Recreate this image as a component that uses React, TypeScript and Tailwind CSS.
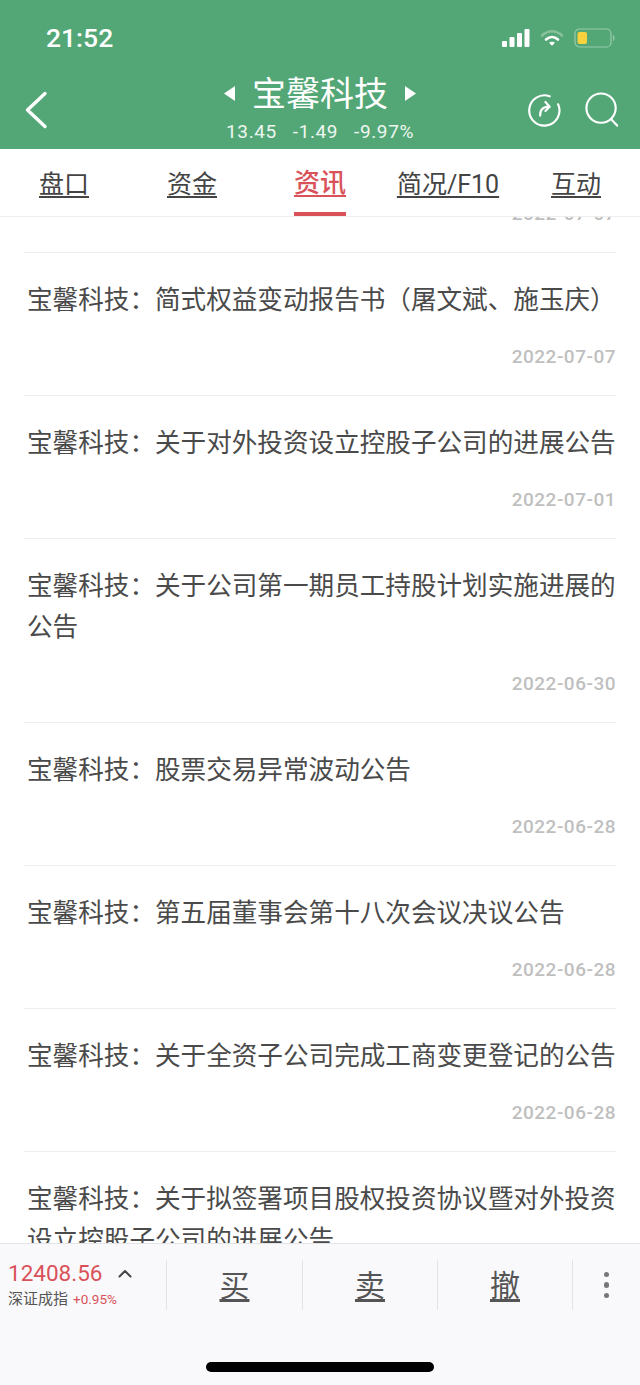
import React from 'react';

const tabs = ['盘口', '资金', '资讯', '简况/F10', '互动'];

const news = [
  { title: '宝馨科技：关于公司股东减持股份的预披露公告', date: '2022-07-07' },
  { title: '宝馨科技：简式权益变动报告书（屠文斌、施玉庆）', date: '2022-07-07' },
  { title: '宝馨科技：关于对外投资设立控股子公司的进展公告', date: '2022-07-01' },
  { title: '宝馨科技：关于公司第一期员工持股计划实施进展的公告', date: '2022-06-30' },
  { title: '宝馨科技：股票交易异常波动公告', date: '2022-06-28' },
  { title: '宝馨科技：第五届董事会第十八次会议决议公告', date: '2022-06-28' },
  { title: '宝馨科技：关于全资子公司完成工商变更登记的公告', date: '2022-06-28' },
  { title: '宝馨科技：关于拟签署项目股权投资协议暨对外投资设立控股子公司的进展公告', date: '2022-06-28' },
];

function StatusIcons() {
  return (
    <div className="flex items-center gap-[10px]">
      <svg width="28" height="20" viewBox="0 0 28 20" fill="#fff">
        <rect x="0" y="13" width="5" height="6" rx="1" />
        <rect x="7.500" y="9" width="5" height="10" rx="1" />
        <rect x="15" y="5" width="5" height="14" rx="1" />
        <rect x="22.500" y="1" width="5" height="18" rx="1" />
      </svg>
      <svg width="24" height="18" viewBox="0 0 24 18" fill="none" strokeLinecap="round">
        <path d="M2 6.500C8 .8 16 .8 22 6.500" stroke="#fff" strokeOpacity="0.3" strokeWidth="2.600" />
        <path d="M6 10.500c3.600-3.200 8.400-3.200 12 0" stroke="#fff" strokeWidth="2.600" />
        <path d="M12 16.800l-3-3c1.800-1.400 4.200-1.400 6 0z" fill="#fff" />
      </svg>
      <svg width="41" height="20" viewBox="0 0 41 20" fill="none">
        <rect x="1" y="1" width="36" height="18" rx="4.500" stroke="#fff" strokeOpacity="0.4" strokeWidth="1.200" />
        <rect x="3.500" y="4" width="9.500" height="12" rx="2" fill="#f7d23e" />
        <path d="M39 7v6c1-.4 1.600-1.600 1.600-3S40 7.400 39 7z" fill="#fff" fillOpacity="0.4" />
      </svg>
    </div>
  );
}

function Header() {
  return (
    <header className="h-[149px] shrink-0 bg-[#53a776] text-white">
      <div className="h-[71px] pt-[5px] pl-[46px] pr-[25px] flex items-center justify-between">
        <span className="text-[26.500px] font-medium leading-none">21:52</span>
        <StatusIcons />
      </div>
      <div className="h-[78px] grid grid-cols-[1fr_auto_1fr] items-center">
        <div className="pl-[24px]">
          <svg width="24" height="38" viewBox="0 0 24 38" fill="none" stroke="#fff" strokeWidth="3.400" strokeLinecap="round" strokeLinejoin="round">
            <path d="M21 2.500 3.500 19 21 35.500" />
          </svg>
        </div>
        <div className="flex flex-col items-center">
          <div className="h-[44px] pt-[1px] flex items-center gap-[17px]">
            <svg width="11" height="15" viewBox="0 0 11 15" fill="#fff"><path d="M11 0v15L0 7.500z" /></svg>
            <span className="text-[34px] leading-none">宝馨科技</span>
            <svg width="11" height="15" viewBox="0 0 11 15" fill="#fff"><path d="M0 0v15l11-7.500z" /></svg>
          </div>
          <div className="h-[34px] pb-[2px] flex items-center gap-[16px] text-[19px] tracking-[0.6px] leading-none text-white/90">
            <span>13.45</span>
            <span>-1.49</span>
            <span>-9.97%</span>
          </div>
        </div>
        <div className="flex items-center justify-end gap-[24px] pr-[21px]">
          <svg width="34" height="34" viewBox="0 0 36 36" fill="none" stroke="#fff" strokeWidth="2.300" strokeLinecap="round" strokeLinejoin="round">
            <path d="M24 3.500A16 16 0 1 0 33 12" />
            <path d="M14 24c-.6-6 3-9.500 9.500-9.500" />
            <path d="M19.500 9.500l4.500 5-4.500 4.500" />
          </svg>
          <svg width="34" height="36" viewBox="0 0 36 38" fill="none" stroke="#fff" strokeWidth="2.300" strokeLinecap="round">
            <circle cx="17" cy="17" r="15.500" />
            <path d="M27.500 28.500l6.500 7" />
          </svg>
        </div>
      </div>
    </header>
  );
}

function Tabs() {
  return (
    <nav className="h-[68px] shrink-0 grid grid-cols-5 bg-white border-b border-[#eeeeee]">
      {tabs.map((tab) => {
        const active = tab === '资讯';
        return (
          <div key={tab} className="flex justify-center">
            <span
              className={
                active
                  ? 'h-full flex items-center border-b-[4px] border-[#d9525a] pt-[6px] text-[26px] font-medium text-[#d9525a] underline underline-offset-[3px]'
                  : 'h-full flex items-center pt-[5px] text-[25px] text-[#444444] underline underline-offset-[3px]'
              }
            >
              {tab}
            </span>
          </div>
        );
      })}
    </nav>
  );
}

function NewsList() {
  return (
    <main className="flex-1 min-h-0 overflow-hidden bg-white">
      <div className="-mt-[108px] mx-[24px]">
        {news.map((item, i) => (
          <div key={i} className="border-t border-[#eeeeee] pt-[27px] pb-[27px] pl-[3px]">
            <p className="text-[25.600px] leading-[41px] text-[#4a4a4a]">{item.title}</p>
            <p className="mt-[25px] h-[22px] text-right text-[19px] font-medium tracking-[0.5px] leading-[22px] text-[#bfbfbf]">{item.date}</p>
          </div>
        ))}
      </div>
    </main>
  );
}

function BottomBar() {
  return (
    <footer className="h-[142px] shrink-0 flex flex-col bg-[#f9f9fb] border-t border-[#e4e4e6]">
      <div className="mt-[16px] h-[50px] flex">
        <div className="w-[166px] shrink-0 pl-[8px]">
          <div className="flex items-center h-[27px]">
            <span className="text-[22.500px] leading-none text-[#d9525a]">12408.56</span>
            <svg className="ml-[16px]" width="14" height="9" viewBox="0 0 14 9" fill="none" stroke="#444" strokeWidth="2" strokeLinecap="round" strokeLinejoin="round">
              <path d="M1.500 7.500 7 2l5.500 5.500" />
            </svg>
          </div>
          <div className="mt-[2px] flex items-center gap-[5px]">
            <span className="text-[15px] leading-[20px] text-[#555555]">深证成指</span>
            <span className="text-[13.500px] leading-[20px] text-[#d9525a]">+0.95%</span>
          </div>
        </div>
        {['买', '卖', '撤'].map((label, i) => (
          <div
            key={label}
            className={
              i === 0
                ? 'w-[136px] shrink-0 border-l border-[#e4e4e6] flex items-center justify-center text-[30px] text-[#555555] underline underline-offset-[3px]'
                : 'w-[135px] shrink-0 border-l border-[#e4e4e6] flex items-center justify-center text-[30px] text-[#555555] underline underline-offset-[3px]'
            }
          >
            {label}
          </div>
        ))}
        <div className="flex-1 border-l border-[#e4e4e6] flex flex-col items-center justify-center gap-[5px]">
          <span className="w-[5.500px] h-[5.500px] rounded-full bg-[#777777]" />
          <span className="w-[5.500px] h-[5.500px] rounded-full bg-[#777777]" />
          <span className="w-[5.500px] h-[5.500px] rounded-full bg-[#777777]" />
        </div>
      </div>
      <div className="mt-[52px] mx-auto w-[228px] h-[10px] rounded-full bg-black" />
    </footer>
  );
}

export default function App() {
  return (
    <div className="w-[640px] h-[1385px] flex flex-col overflow-hidden bg-white font-['Roboto','Noto_Sans_CJK_SC',sans-serif]">
      <Header />
      <Tabs />
      <NewsList />
      <BottomBar />
    </div>
  );
}
